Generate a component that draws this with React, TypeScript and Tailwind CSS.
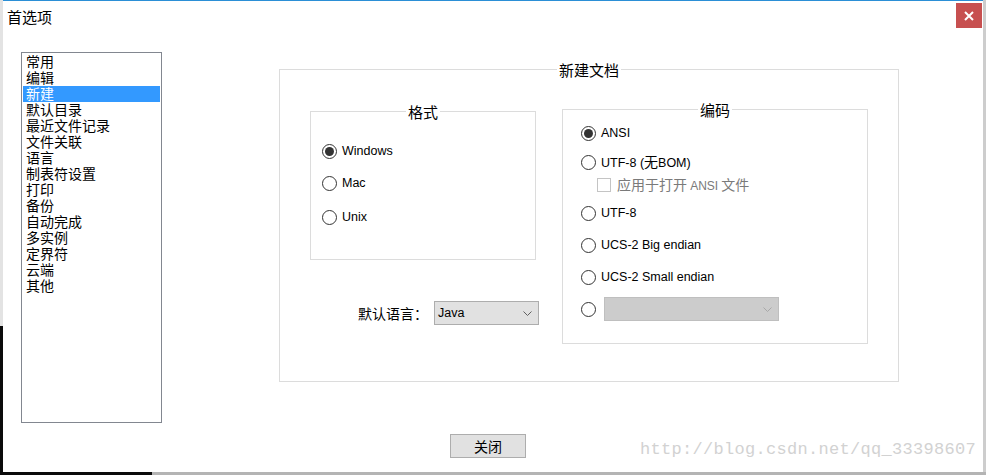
const ui = "font-['Liberation_Sans','Noto_Sans_CJK_SC',sans-serif]";
const cjk = "font-['Noto_Sans_CJK_SC',sans-serif]";

const NAV_ITEMS = [
  "常用",
  "编辑",
  "新建",
  "默认目录",
  "最近文件记录",
  "文件关联",
  "语言",
  "制表符设置",
  "打印",
  "备份",
  "自动完成",
  "多实例",
  "定界符",
  "云端",
  "其他",
];

function Radio({ checked, label }: { checked?: boolean; label?: React.ReactNode }) {
  return (
    <div className="flex h-[20px] items-center">
      <span className="flex h-[15px] w-[15px] shrink-0 items-center justify-center rounded-full border border-[#333] bg-white">
        {checked && <span className="h-[9px] w-[9px] rounded-full bg-[#333]" />}
      </span>
      {label && (
        <span className={`ml-[5px] whitespace-nowrap text-[12.5px] leading-[20px] text-black ${ui}`}>{label}</span>
      )}
    </div>
  );
}

function Chevron({ color }: { color: string }) {
  return (
    <svg width="9" height="5" viewBox="0 0 9 5" fill="none">
      <path d="M0.5 0.5 L4.5 4.5 L8.5 0.5" stroke={color} strokeWidth="1" />
    </svg>
  );
}

function GroupLabel({ text }: { text: string }) {
  return (
    <span
      className={`absolute -top-[10px] left-1/2 -translate-x-1/2 whitespace-nowrap bg-white px-[2px] text-[15px] leading-[19px] text-black ${cjk}`}
    >
      {text}
    </span>
  );
}

export default function App(): React.ReactElement {
  return (
    <div className="flex h-[475px] w-[986px] flex-col overflow-hidden bg-[#c8c8c8]">
      <div className="flex flex-1">
        {/* background peeking out on the left */}
        <div className="flex w-[3px] flex-col">
          <div className="flex-1 bg-[#e3e3e3]" />
          <div className="h-[146px] bg-[#0b0b0b]" />
        </div>

        {/* Dialog window */}
        <div className="flex w-[980px] flex-col border-t border-[#2b8fd6] bg-white">
          {/* Title bar */}
          <div className="flex h-[29px] items-start justify-between">
            <span className={`ml-[4px] mt-[6px] text-[15px] leading-[19px] text-black ${cjk}`}>首选项</span>
            <button className="mr-[1px] mt-[2px] flex h-[25px] w-[26px] items-center justify-center bg-[#c75050]">
              <svg width="10" height="10" viewBox="0 0 10 10">
                <path d="M1 1 L9 9 M9 1 L1 9" stroke="white" strokeWidth="2" />
              </svg>
            </button>
          </div>

          {/* Content */}
          <div className="flex h-[394px] items-start">
            <div className="ml-[18px] mt-[22px] h-[371px] w-[141px] shrink-0 border border-[#828790] bg-white px-[1px] pt-[1px]">
              {NAV_ITEMS.map((item) => (
                <div
                  key={item}
                  className={`h-[16px] pl-[3px] text-[14px] leading-[16px] ${ui} ${
                    item === "新建" ? "bg-[#3399ff] text-white" : "text-black"
                  }`}
                >
                  {item}
                </div>
              ))}
            </div>

            {/* 新建文档 */}
            <div className="relative ml-[117px] mt-[39px] h-[313px] w-[620px] shrink-0 border border-[#dcdcdc]">
              <GroupLabel text="新建文档" />
              <div className="flex items-start">
                <div className="ml-[30px] flex w-[226px] shrink-0 flex-col">
                  {/* 格式 */}
                  <div className="relative mt-[41px] h-[149px] w-[226px] border border-[#dcdcdc] pl-[11px]">
                    <GroupLabel text="格式" />
                    <div className="mt-[29px]">
                      <Radio checked label="Windows" />
                    </div>
                    <div className="mt-[12px]">
                      <Radio label="Mac" />
                    </div>
                    <div className="mt-[14px]">
                      <Radio label="Unix" />
                    </div>
                  </div>

                  <div className="mr-[-3px] mt-[41px] flex items-center justify-end">
                    <span className={`whitespace-nowrap text-[14px] leading-[24px] text-black ${cjk}`}>默认语言：</span>
                    <div className="ml-[6px] flex h-[24px] w-[105px] shrink-0 items-center justify-between border border-[#adadad] bg-[#e1e1e1] pl-[3px] pr-[6px]">
                      <span className={`text-[12.5px] text-black ${ui}`}>Java</span>
                      <Chevron color="#606060" />
                    </div>
                  </div>
                </div>

                {/* 编码 */}
                <div className="relative ml-[26px] mt-[39px] h-[235px] w-[306px] shrink-0 border border-[#dcdcdc] pl-[18px]">
                  <GroupLabel text="编码" />
                  <div className="mt-[13px]">
                    <Radio checked label="ANSI" />
                  </div>
                  <div className="mt-[9px]">
                    <Radio
                      label={
                        <>
                          UTF-8 (<span className={`text-[14px] ${cjk}`}>无</span>BOM)
                        </>
                      }
                    />
                  </div>
                  <div className="ml-[16px] mt-[3px] flex h-[20px] items-center">
                    <span className="h-[14px] w-[14px] border border-[#c4c4c4] bg-white" />
                    <span className={`ml-[6px] text-[14px] leading-[20px] text-[#7a7a7a] ${cjk}`}>
                      应用于打开 <span className={`text-[12px] ${ui}`}>ANSI</span> 文件
                    </span>
                  </div>
                  <div className="mt-[8px]">
                    <Radio label="UTF-8" />
                  </div>
                  <div className="mt-[12px]">
                    <Radio label="UCS-2 Big endian" />
                  </div>
                  <div className="mt-[12px]">
                    <Radio label="UCS-2 Small endian" />
                  </div>
                  <div className="mt-[10px] flex h-[24px] items-center">
                    <Radio />
                    <div className="ml-[8px] flex h-[24px] w-[175px] items-center justify-end border border-[#bfbfbf] bg-[#cccccc] pr-[6px]">
                      <Chevron color="#a8a8a8" />
                    </div>
                  </div>
                </div>
              </div>
            </div>
          </div>

          {/* Footer */}
          <div className="flex flex-1 items-start">
            <button
              className={`ml-[447px] mt-[10px] h-[24px] w-[76px] border border-[#adadad] bg-[#e1e1e1] text-[14px] leading-[22px] text-black ${cjk}`}
            >
              关闭
            </button>
            <span className="ml-[114px] mt-[16px] whitespace-nowrap font-['Liberation_Mono',monospace] text-[17px] leading-[20px] tracking-[0.3px] text-[#d2d2d2]">
              http://blog.csdn.net/qq_33398607
            </span>
          </div>
        </div>

        <div className="flex-1 bg-[#cdcdcd]" />
      </div>
      <div className="flex h-[3px]">
        <div className="w-[152px] bg-[#0b0b0b]" />
        <div className="flex-1 bg-[#b4b4b4]" />
      </div>
    </div>
  );
}
